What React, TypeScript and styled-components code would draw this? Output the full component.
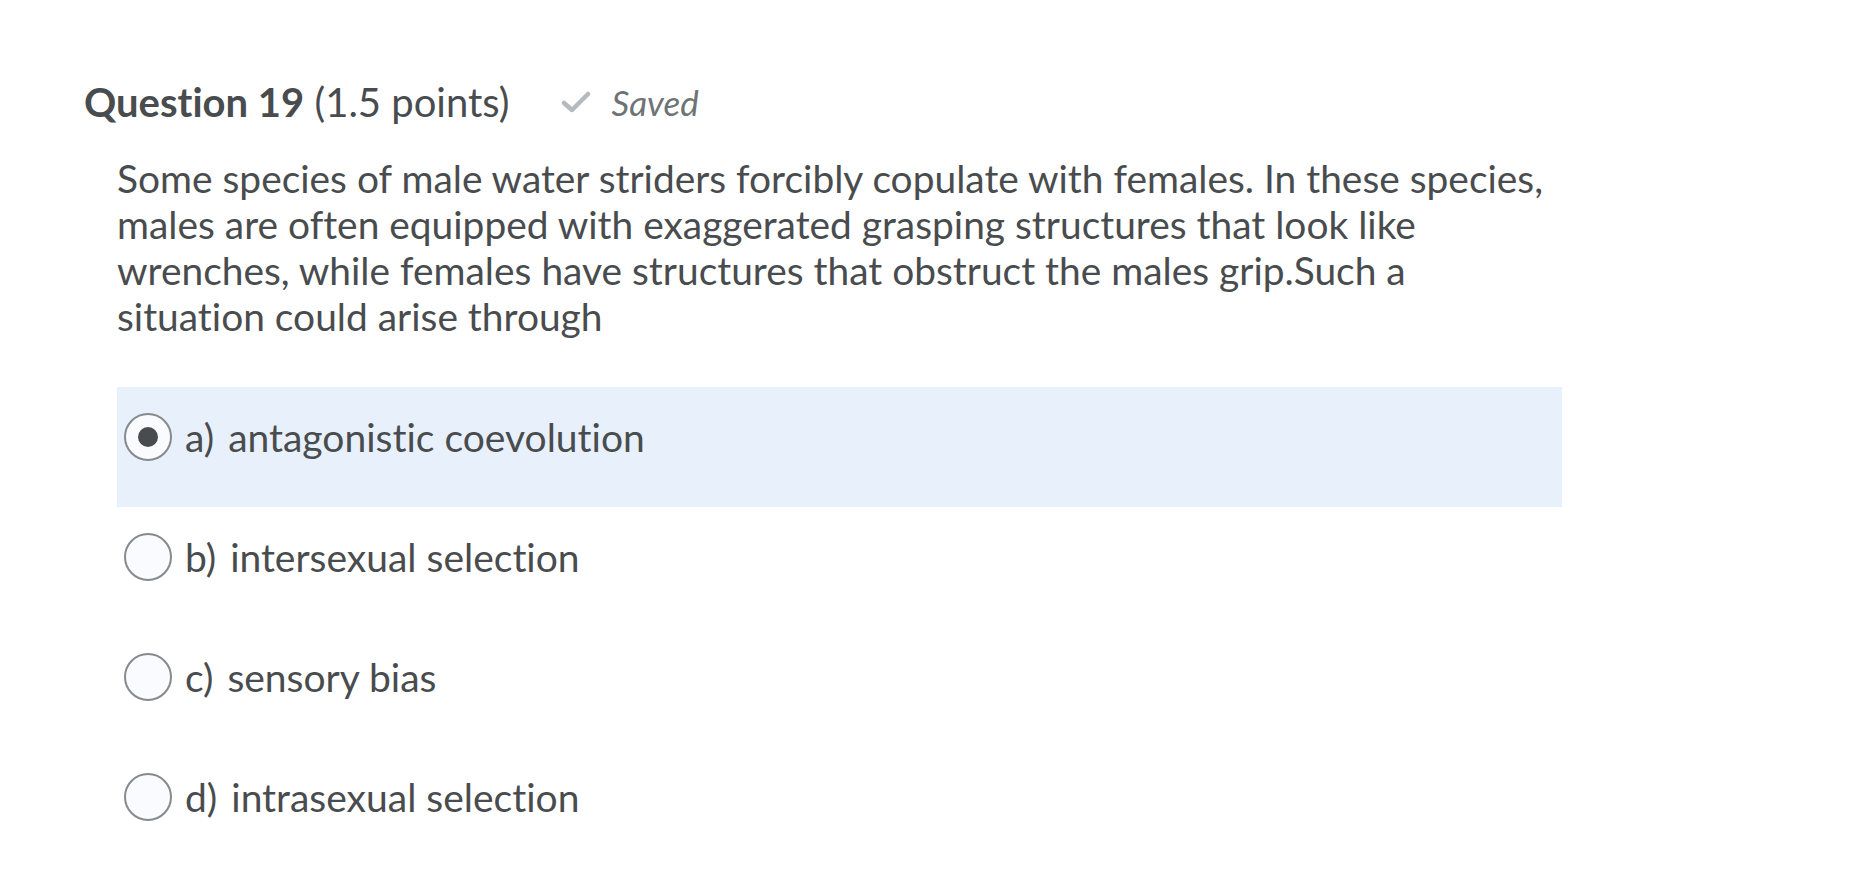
import React from "react";
import styled, { createGlobalStyle } from "styled-components";

const Global = createGlobalStyle`
  html, body { margin: 0; padding: 0; background: #ffffff; }
  body {
    font-family: Lato, "Open Sans", "Liberation Sans", sans-serif;
    color: #494c4e;
    font-variant-ligatures: none;
  }
`;

const Page = styled.main`
  padding: 78px 0 40px 84px;
`;

const Header = styled.div`
  display: flex;
  align-items: center;
`;

const Title = styled.h2`
  margin: 0;
  font-size: 40px;
  line-height: 48px;
  font-weight: 400;
  color: #494c4e;
`;

const TitleStrong = styled.strong`
  font-weight: 700;
`;

const SavedStatus = styled.span`
  display: inline-flex;
  align-items: center;
  gap: 20px;
  margin-left: 52px;
  font-size: 35px;
  font-style: italic;
  color: #6e7376;
`;

const Body = styled.div`
  width: 1445px;
  margin-left: 33px;
`;

const Prompt = styled.p`
  margin: 29px 0 0 0;
  max-width: 1435px;
  font-size: 38.9px;
  line-height: 46px;
`;

const Options = styled.div`
  margin-top: 48px;
  display: flex;
  flex-direction: column;
`;

const Option = styled.label<{ $selected?: boolean }>`
  box-sizing: border-box;
  display: flex;
  align-items: center;
  height: 120px;
  padding: 0 0 20px 7px;
  gap: 13px;
  background: ${(p) => (p.$selected ? "#e8f1fb" : "transparent")};
  font-size: 39px;
  cursor: pointer;
`;

const Radio = styled.span<{ $checked?: boolean }>`
  box-sizing: border-box;
  width: 48px;
  height: 48px;
  border-radius: 50%;
  border: 2px solid #868a8d;
  background: #f9fbff;
  display: flex;
  align-items: center;
  justify-content: center;
  flex: none;
  &::after {
    content: "";
    width: 20px;
    height: 20px;
    border-radius: 50%;
    background: #494c4e;
    display: ${(p) => (p.$checked ? "block" : "none")};
  }
`;

const Letter = styled.span`
  margin-right: 14px;
`;

const options = [
  { key: "a)", text: "antagonistic coevolution", selected: true },
  { key: "b)", text: "intersexual selection" },
  { key: "c)", text: "sensory bias" },
  { key: "d)", text: "intrasexual selection" },
];

export default function App() {
  return (
    <>
      <Global />
      <Page>
        <Header>
          <Title>
            <TitleStrong>Question 19</TitleStrong> (1.5 points)
          </Title>
          <SavedStatus>
            <svg width="30" height="24" viewBox="0 0 30 24" aria-hidden="true">
              <path d="M3 13 L11 20 L27 4" fill="none" stroke="#b5babe" strokeWidth="4.5" strokeLinecap="round" strokeLinejoin="round" />
            </svg>
            Saved
          </SavedStatus>
        </Header>
        <Body>
          <Prompt>
            Some species of male water striders forcibly copulate with females. In these species, males are often equipped with exaggerated grasping structures that look like wrenches, while females have structures that obstruct the males grip.Such a situation could arise through
          </Prompt>
          <Options>
            {options.map((o) => (
              <Option key={o.key} $selected={o.selected}>
                <Radio $checked={o.selected} />
                <span>
                  <Letter>{o.key}</Letter>
                  {o.text}
                </span>
              </Option>
            ))}
          </Options>
        </Body>
      </Page>
    </>
  );
}
